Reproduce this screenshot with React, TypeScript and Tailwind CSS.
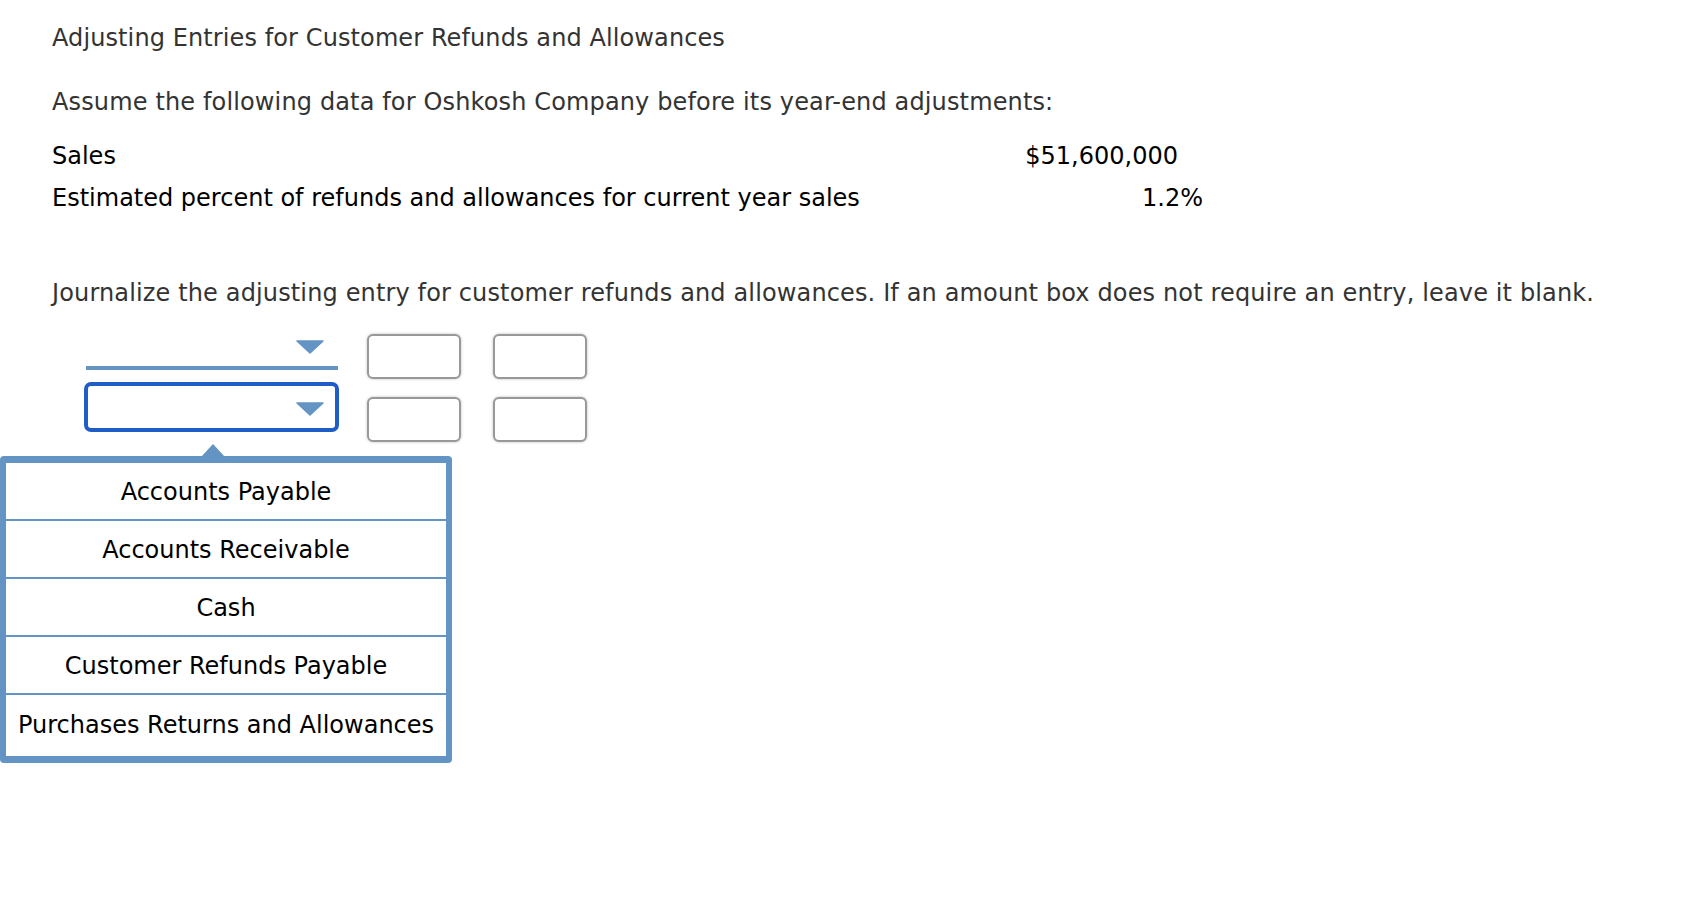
import React from 'react';

const accounts = [
  'Accounts Payable',
  'Accounts Receivable',
  'Cash',
  'Customer Refunds Payable',
  'Purchases Returns and Allowances',
];

function Caret() {
  return (
    <svg width="28" height="14" viewBox="0 0 28 14" className="block">
      <path d="M1 1 L27 1 L14 13 Z" fill="#6394c4" stroke="#6394c4" strokeWidth="1.5" strokeLinejoin="round" />
    </svg>
  );
}

function AmountBox() {
  return (
    <div className="w-[94px] h-[45px] rounded-[6px] border-2 border-[#999999] bg-white shadow-[0_0_3px_rgba(0,0,0,0.25)]" />
  );
}

export default function App() {
  return (
    <div
      className="relative w-[1682px] h-[902px] bg-white text-[24px] leading-[28px]"
      style={{ fontFamily: '"DejaVu Sans", Verdana, sans-serif' }}
    >
      <div className="pl-[52px] pt-[24px]">
        <div className="text-[#333333] tracking-[0.1px]">Adjusting Entries for Customer Refunds and Allowances</div>
        <div className="mt-[36px] text-[#333333] tracking-[0.14px]">
          Assume the following data for Oshkosh Company before its year-end adjustments:
        </div>

        {/* Data rows */}
        <div className="mt-[26px] w-[1151px] text-black">
          <div className="flex justify-between">
            <span>Sales</span>
            <span className="pr-[25px]">$51,600,000</span>
          </div>
          <div className="flex justify-between mt-[14px]">
            <span>Estimated percent of refunds and allowances for current year sales</span>
            <span>1.2%</span>
          </div>
        </div>

        <div className="mt-[67px] text-[#333333] tracking-[0.14px] whitespace-nowrap">
          Journalize the adjusting entry for customer refunds and allowances. If an amount box does not require an entry, leave it blank.
        </div>
      </div>

      {/* Journal entry rows */}
      <div className="mt-[27px] pl-[84px] flex flex-col">
        <div className="flex items-start">
          <div className="ml-[2px] w-[252px] h-[36px] border-b-4 border-[#6394c4] flex justify-end items-start pt-[6px] pr-[14px]">
            <Caret />
          </div>
          <div className="ml-[29px] flex gap-[32px]">
            <AmountBox />
            <AmountBox />
          </div>
        </div>
        <div className="flex items-start mt-[3px]">
          <div className="w-[255px] h-[50px] rounded-[7px] border-4 border-[#1f5cc6] flex justify-end items-start pt-[16px] pr-[11px]">
            <Caret />
          </div>
          <div className="ml-[28px] mt-[15px] flex gap-[32px]">
            <AmountBox />
            <AmountBox />
          </div>
        </div>
      </div>

      {/* Open dropdown menu */}
      <div className="absolute left-0 top-[456px] w-[452px]">
        <div className="absolute left-[201px] top-[-12px] w-0 h-0 border-l-[12px] border-r-[12px] border-b-[13px] border-l-transparent border-r-transparent border-b-[#6394c4]" />
        <div className="border-[6px] border-t-[7px] border-b-[7px] border-[#6394c4] rounded-[4px] bg-white pb-[3px]">
          {accounts.map((a, i) => (
            <div
              key={a}
              className={`flex items-center justify-center text-black whitespace-nowrap pt-[2px] ${i < accounts.length - 1 ? 'h-[58px] border-b-2 border-[#6394c4]' : 'h-[58px]'}`}
            >
              {a}
            </div>
          ))}
        </div>
      </div>
    </div>
  );
}
